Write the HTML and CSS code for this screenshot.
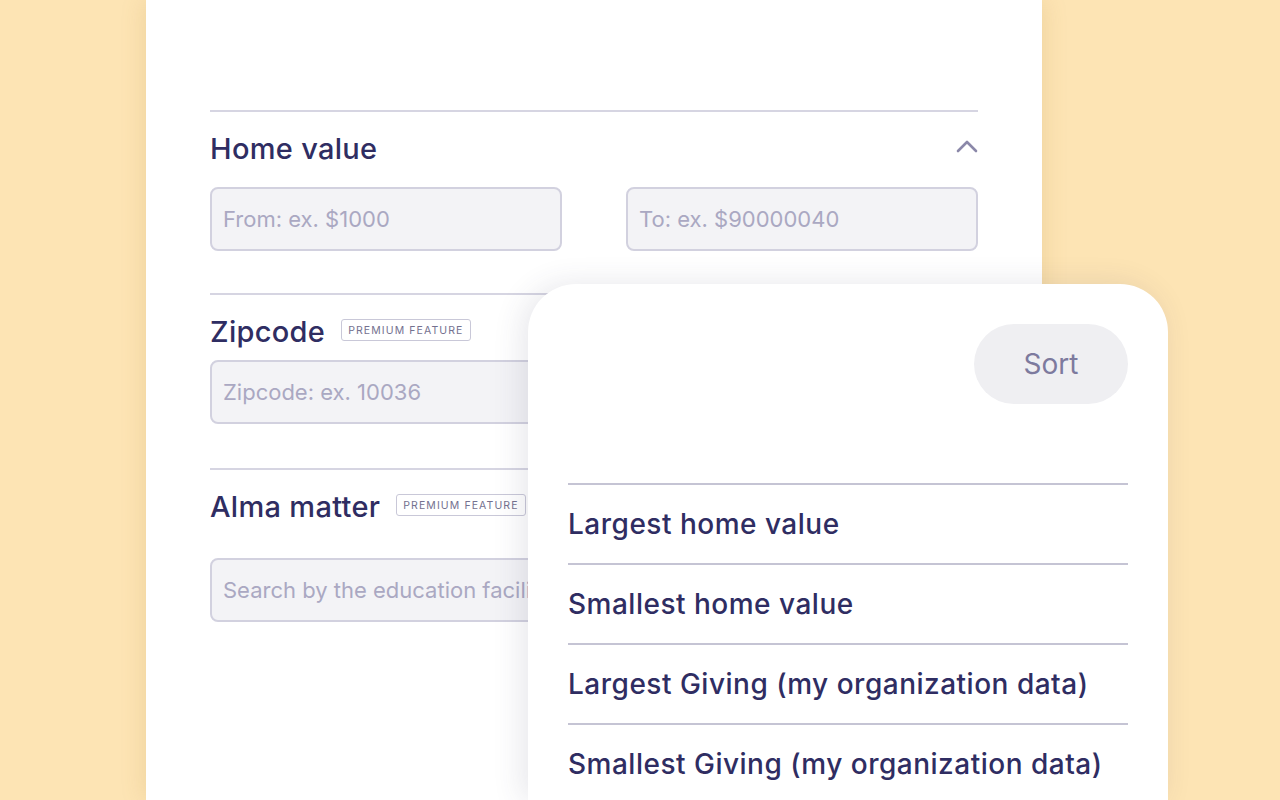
FILE: index.html
```html
<!DOCTYPE html>
<html>
<head>
<meta charset="utf-8">
<link rel="stylesheet" href="styles.css">
</head>
<body>
<div class="stage">
  <div class="card">
    <section class="group">
      <div class="group-head first">
        <h2 class="title">Home value</h2>
        <svg class="chevron" width="22" height="14" viewBox="0 0 22 14"><path d="M2 12 L11 3 L20 12" fill="none" stroke="#8b88a9" stroke-width="2.6" stroke-linecap="round" stroke-linejoin="round"/></svg>
      </div>
      <div class="row2">
        <div class="input">From: ex. $1000</div>
        <div class="input">To: ex. $90000040</div>
      </div>
    </section>
    <section class="group">
      <div class="group-head">
        <h2 class="title">Zipcode</h2>
        <span class="badge">PREMIUM FEATURE</span>
      </div>
      <div class="input">Zipcode: ex. 10036</div>
    </section>
    <section class="group">
      <div class="group-head tall">
        <h2 class="title">Alma matter</h2>
        <span class="badge">PREMIUM FEATURE</span>
      </div>
      <div class="input">Search by the education facility name</div>
    </section>
  </div>
  <div class="popup">
    <div class="popup-top">
      <button class="sort">Sort</button>
    </div>
    <ul class="options">
      <li>Largest home value</li>
      <li>Smallest home value</li>
      <li>Largest Giving (my organization data)</li>
      <li>Smallest Giving (my organization data)</li>
    </ul>
  </div>
</div>
</body>
</html>
```

FILE: styles.css
```css
* { box-sizing: border-box; }
html, body { margin: 0; padding: 0; }
body {
  background: #fde4b4;
  font-family: Inter, "Open Sans", sans-serif;
  color: #2f2d62;
  width: 1280px;
  height: 800px;
  overflow: hidden;
}
.stage {
  position: relative;
  width: 1280px;
  height: 800px;
  overflow: hidden;
}
.card {
  margin-left: 146px;
  width: 896px;
  height: 800px;
  background: #fff;
  padding: 110px 64px 0;
  box-shadow: 0 0 24px rgba(160, 120, 40, 0.18);
}
.group {
  border-top: 2px solid #d6d5e2;
  padding-top: 18px;
  padding-bottom: 42px;
}
.group:nth-child(2) { padding-bottom: 44px; }
.group-head {
  display: flex;
  align-items: center;
  gap: 16px;
  height: 36px;
  margin-bottom: 11px;
}
.group-head.first { margin-bottom: 21px; }
.group-head.tall { margin-bottom: 34px; }
.title {
  margin: 0;
  font-size: 29px;
  font-weight: 500;
  letter-spacing: 0.3px;
  color: #2f2d62;
}
.chevron { margin-left: auto; margin-right: 0; margin-top: -4px; }
.badge {
  border: 1.5px solid #c9c8d8;
  border-radius: 3px;
  font-size: 10.5px;
  letter-spacing: 1.1px;
  color: #74718f;
  padding: 4px 6px 3px;
  line-height: 13px;
  margin-top: -2px;
}
.row2 {
  display: grid;
  grid-template-columns: 352px 352px;
  justify-content: space-between;
}
.input {
  height: 64px;
  background: #f3f3f6;
  border: 2px solid #d2d1df;
  border-radius: 8px;
  padding: 0 11px;
  display: flex;
  align-items: center;
  font-size: 22px;
  color: #aaa8c2;
  white-space: nowrap;
  overflow: hidden;
}
.popup {
  position: absolute;
  left: 528px;
  top: 284px;
  width: 640px;
  height: 516px;
  overflow: hidden;
  background: #fff;
  border-radius: 48px 48px 0 0;
  box-shadow: -6px 0 30px rgba(60, 60, 90, 0.12);
  padding: 40px 40px 0;
}
.popup-top {
  display: flex;
  justify-content: flex-end;
  height: 161px;
  border-bottom: 2px solid #c5c4d4;
}
.sort {
  width: 154px;
  height: 80px;
  border: none;
  border-radius: 40px;
  background: #efeff2;
  font-family: Inter, "Open Sans", sans-serif;
  font-size: 28px;
  color: #7d7a9e;
  padding: 0;
}
.options {
  list-style: none;
  margin: 0;
  padding: 0;
}
.options li {
  height: 80px;
  display: flex;
  align-items: center;
  border-bottom: 2px solid #c5c4d4;
  font-size: 28px;
  font-weight: 500;
  letter-spacing: 0.5px;
  color: #2f2d62;
}
```
